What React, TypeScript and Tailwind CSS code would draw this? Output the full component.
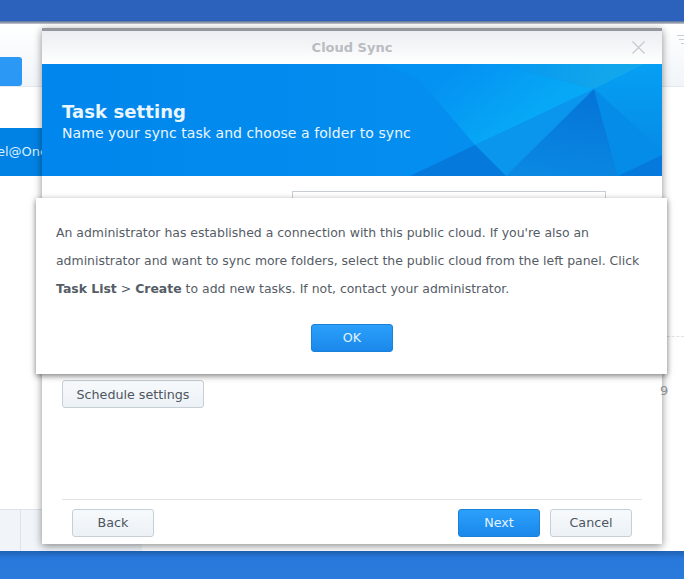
const font = "font-['DejaVu_Sans',Verdana,sans-serif]";

function Banner() {
  return (
    <svg className="absolute inset-0 h-full w-full" viewBox="0 0 620 112" preserveAspectRatio="none">
      <defs>
        <linearGradient id="base" x1="0" y1="0" x2="1" y2="0">
          <stop offset="0" stopColor="#0086ec" />
          <stop offset="0.6" stopColor="#048eef" />
          <stop offset="1" stopColor="#0592f0" />
        </linearGradient>
        <linearGradient id="mid" gradientUnits="userSpaceOnUse" x1="415" y1="5" x2="465" y2="72">
          <stop offset="0" stopColor="#0492f2" />
          <stop offset="1" stopColor="#07a9f6" />
        </linearGradient>
        <linearGradient id="top" gradientUnits="userSpaceOnUse" x1="470" y1="0" x2="560" y2="22">
          <stop offset="0" stopColor="#0699f0" />
          <stop offset="1" stopColor="#12a6ec" />
        </linearGradient>
        <linearGradient id="side" x1="0" y1="0" x2="0" y2="1">
          <stop offset="0" stopColor="#05a0f4" />
          <stop offset="1" stopColor="#068ce8" />
        </linearGradient>
        <linearGradient id="dark" x1="0.6" y1="0" x2="0.4" y2="1">
          <stop offset="0" stopColor="#0574d8" />
          <stop offset="1" stopColor="#0a88e2" />
        </linearGradient>
      </defs>
      <rect width="620" height="112" fill="url(#base)" />
      <polygon points="340,0 455,0 552,25 433,81 375,13" fill="url(#mid)" />
      <polygon points="455,0 603,0 552,25" fill="url(#top)" />
      <polygon points="603,0 620,0 620,86 552,25" fill="url(#side)" />
      <polygon points="433,81 552,25 464,112" fill="#0a96ec" />
      <polygon points="552,25 464,112 576,112" fill="url(#dark)" />
      <polygon points="552,25 620,86 620,91 576,112" fill="#058ce9" />
      <polygon points="433,81 368,112 464,112" fill="#0579dc" />
      <polygon points="620,91 576,112 620,112" fill="#0679dc" />
    </svg>
  );
}

function Btn({ label, primary, className }: { label: string; primary?: boolean; className: string }) {
  return (
    <button
      className={
        primary
          ? `h-7 rounded-[3px] border border-[#1b80d8] bg-gradient-to-b from-[#2ba0fb] to-[#1a88ea] text-[12.7px] text-[#e4f3ff] ${className}`
          : `h-7 rounded-[3px] border border-[#c6ced6] bg-gradient-to-b from-[#f7fafc] to-[#ecf1f6] text-[12.7px] text-[#4d5560] ${className}`
      }
    >
      {label}
    </button>
  );
}

export default function App() {
  return (
    <div className={`relative flex h-[579px] w-[684px] flex-col overflow-hidden bg-white ${font}`}>
      <div className="h-[21px] bg-[#2d62bc]" />
      <div className="h-[3px] bg-gradient-to-b from-[#5a6f96] to-[#c8cacd]" />

      {/* app window behind the dialog */}
      <div className="flex flex-1 flex-col">
        <div className="flex h-[63px] items-end border-b border-[#e4e8ec] bg-gradient-to-b from-[#ffffff] to-[#f1f5f9]">
          <div className="h-[29px] w-[22px] rounded-r-[3px] bg-[#2b98f5]" />
        </div>
        <div className="h-[41px]" />
        <div className="flex h-[48px] w-[100px] items-center justify-end bg-[#0082e4] pr-[52px] text-[13px] whitespace-nowrap text-[#d8eeff]">
          el@One
        </div>
        <div className="flex-1" />
        <div className="flex h-[42px]">
          <div className="h-full w-[21px] border-t border-r border-[#dde3e9] bg-[#f1f5f9]" />
          <div className="h-full w-[121px] border-t border-[#dde3e9] bg-[#f1f5f9]" />
        </div>
      </div>
      <div className="h-[28px] bg-gradient-to-b from-[#1f62b4] via-[#2877da] via-25% to-[#2a7adc]" />

      <svg className="absolute top-[34px] left-[677px]" width="7" height="12" viewBox="0 0 7 12" fill="none" stroke="#c9ced4">
        <path d="M0 1.5h7M2 5.5h5M4 9.5h3" />
      </svg>
      <div className="absolute top-[336px] left-[667px] w-[17px] border-t border-dashed border-[#e2e2e2]" />

      {/* Cloud Sync dialog */}
      <div className="absolute top-[28px] left-[42px] flex h-[516px] w-[620px] flex-col border-t-[3px] border-[#94989d] bg-white shadow-[0_2px_8px_rgba(0,0,0,0.45)]">
        <div className="relative flex h-[33px] items-center justify-center bg-gradient-to-b from-[#eceef1] to-[#ffffff] text-[13px] font-bold text-[#b9bcc0]">
          Cloud Sync
          <svg className="absolute top-[10px] right-[17px]" width="13" height="13" viewBox="0 0 13 13" stroke="#c4c8cc" strokeWidth="1.1">
            <path d="M0.5 0.5l12 12M12.5 0.5l-12 12" />
          </svg>
        </div>
        <div className="relative h-[112px] overflow-hidden">
          <Banner />
          <div className="relative pt-[37px] pl-5 text-[#eaf6ff]">
            <div className="text-[18px] leading-[22px] font-bold tracking-[0.08px]">Task setting</div>
            <div className="text-[14px] leading-[20px] tracking-[0.065px]">Name your sync task and choose a folder to sync</div>
          </div>
        </div>
        <div className="flex flex-1 flex-col px-5">
          <div className="mt-[15px] ml-[230px] h-[30px] w-[314px] border border-[#c9ced4]" />
          <div className="flex-1" />
          <button className="mb-[91px] h-7 w-[142px] rounded-[3px] border border-[#c6ced6] bg-gradient-to-b from-[#f7fafc] to-[#ecf1f6] pt-px text-[12.7px] text-[#4d5560]">
            Schedule settings
          </button>
          <div className="flex h-[45px] items-start gap-[10px] border-t border-[#e3e3e3] px-[10px] pt-[9px]">
            <Btn label="Back" className="mr-auto w-[82px]" />
            <Btn label="Next" primary className="w-[82px]" />
            <Btn label="Cancel" className="w-[82px]" />
          </div>
        </div>
      </div>
      <div className="absolute top-[381px] left-[660px] text-[13px] text-[#8a8f96]">9</div>

      {/* alert */}
      <div className="absolute top-[198px] left-[36px] flex h-[176px] w-[631px] flex-col bg-white px-5 pt-[21px] shadow-[0_2px_6px_rgba(0,0,0,0.5)]">
        <p className="text-[12.45px] leading-[28px] whitespace-nowrap text-[#555c66]">
          An administrator has established a connection with this public cloud. If you're also an
          <br />
          administrator and want to sync more folders, select the public cloud from the left panel. Click
          <br />
          <b>Task List</b> &gt; <b>Create</b> to add new tasks. If not, contact your administrator.
        </p>
        <div className="mt-[21px] flex justify-center pl-[1px]">
          <Btn label="OK" primary className="w-[82px]" />
        </div>
      </div>
    </div>
  );
}
